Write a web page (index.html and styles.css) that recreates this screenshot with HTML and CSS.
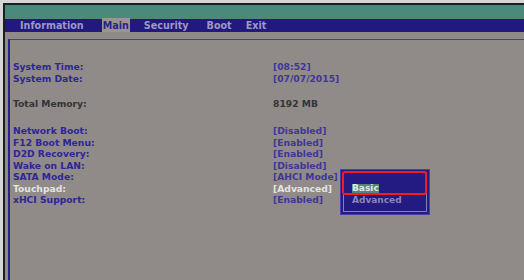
FILE: index.html
```html
<!DOCTYPE html>
<html>
<head>
<meta charset="utf-8">
<link rel="stylesheet" href="styles.css">
</head>
<body>
<div class="screen">
  <div class="title"></div>
  <div class="nav">
    <span class="tab tab-info">Information</span>
    <span class="tab tab-main active">Main</span>
    <span class="tab tab-sec">Security</span>
    <span class="tab tab-boot">Boot</span>
    <span class="tab tab-exit">Exit</span>
  </div>
  <div class="main">
    <div class="frame">
      <div class="group">
        <span class="label">System Time:</span><span class="value">[08:52]</span>
        <span class="label">System Date:</span><span class="value">[07/07/2015]</span>
      </div>
      <div class="group group-mem">
        <span class="label info">Total Memory:</span><span class="value info">8192 MB</span>
      </div>
      <div class="group group-opts">
        <span class="label">Network Boot:</span><span class="value">[Disabled]</span>
        <span class="label">F12 Boot Menu:</span><span class="value">[Enabled]</span>
        <span class="label">D2D Recovery:</span><span class="value">[Enabled]</span>
        <span class="label">Wake on LAN:</span><span class="value">[Disabled]</span>
        <span class="label">SATA Mode:</span><span class="value">[AHCI Mode]</span>
        <span class="label selected">Touchpad:</span><span class="value selected">[Advanced]</span>
        <span class="label">xHCI Support:</span><span class="value">[Enabled]</span>
      </div>
    </div>
  </div>
</div>
<div class="popup">
  <div class="popup-inner">
    <div class="option"><span class="opt-hl">Basic</span></div>
    <div class="option">Advanced</div>
  </div>
</div>
<div class="annot"></div>
</body>
</html>
```

FILE: styles.css
```css
html, body {
  margin: 0;
  padding: 0;
}
body {
  position: relative;
  width: 524px;
  height: 280px;
  overflow: hidden;
  background: #d6d6d6;
  font-family: "DejaVu Sans", sans-serif;
  font-weight: bold;
}
.screen {
  box-sizing: border-box;
  margin: 3px 0 0 3px;
  height: 277px;
  border-top: 2px solid #1e1e1e;
  border-left: 2px solid #1e1e1e;
  display: flex;
  flex-direction: column;
  background: #908a88;
}
.title {
  height: 14px;
  background: #4b897d;
}
.nav {
  height: 13px;
  background: #22187e;
  display: flex;
  align-items: stretch;
  font-size: 9.6px;
  line-height: 13px;
  color: #9d99c4;
  padding-left: 14px;
}
.tab {
  padding: 0 1px;
  white-space: nowrap;
}
.tab-main { margin-left: 17px; }
.tab-sec { margin-left: 13px; }
.tab-boot { margin-left: 16px; }
.tab-exit { margin-left: 12px; }
.tab.active {
  background: #9a9592;
  color: #2a2290;
  margin-top: -1px;
  line-height: 15px;
}
.main {
  flex: 1;
  padding: 7px 0 0 3px;
  display: flex;
}
.frame {
  flex: 1;
  border-left: 2px solid #2a2190;
  border-top: 1px solid #4b4180;
  padding: 21.3px 0 0 3px;
}
.group {
  display: grid;
  grid-template-columns: 260px auto;
  font-size: 9.2px;
  line-height: 11.45px;
  white-space: nowrap;
}
.group-mem { margin-top: 14.1px; }
.group-opts { margin-top: 15.6px; }
.label { color: #2f2697; }
.value { color: #3f3699; }
.info { color: #343434; }
.selected { color: #e4e4e4; }
.popup {
  position: absolute;
  left: 340px;
  top: 169px;
  width: 90px;
  height: 46px;
  box-sizing: border-box;
  border: 1px solid #463fae;
  background: #231a82;
  padding: 2px;
}
.popup-inner {
  box-sizing: border-box;
  height: 100%;
  border: 1px solid #8581b0;
  padding: 9px 0 0 8px;
  font-size: 9px;
  line-height: 12px;
  color: #8a86b6;
}
.opt-hl {
  display: inline-block;
  background: #4b897d;
  color: #e6e6e6;
  line-height: 8.5px;
  height: 8.5px;
}
.annot {
  position: absolute;
  left: 342px;
  top: 171px;
  width: 85px;
  height: 24px;
  box-sizing: border-box;
  border: 2px solid #f51b1b;
  border-radius: 3px;
}
```
